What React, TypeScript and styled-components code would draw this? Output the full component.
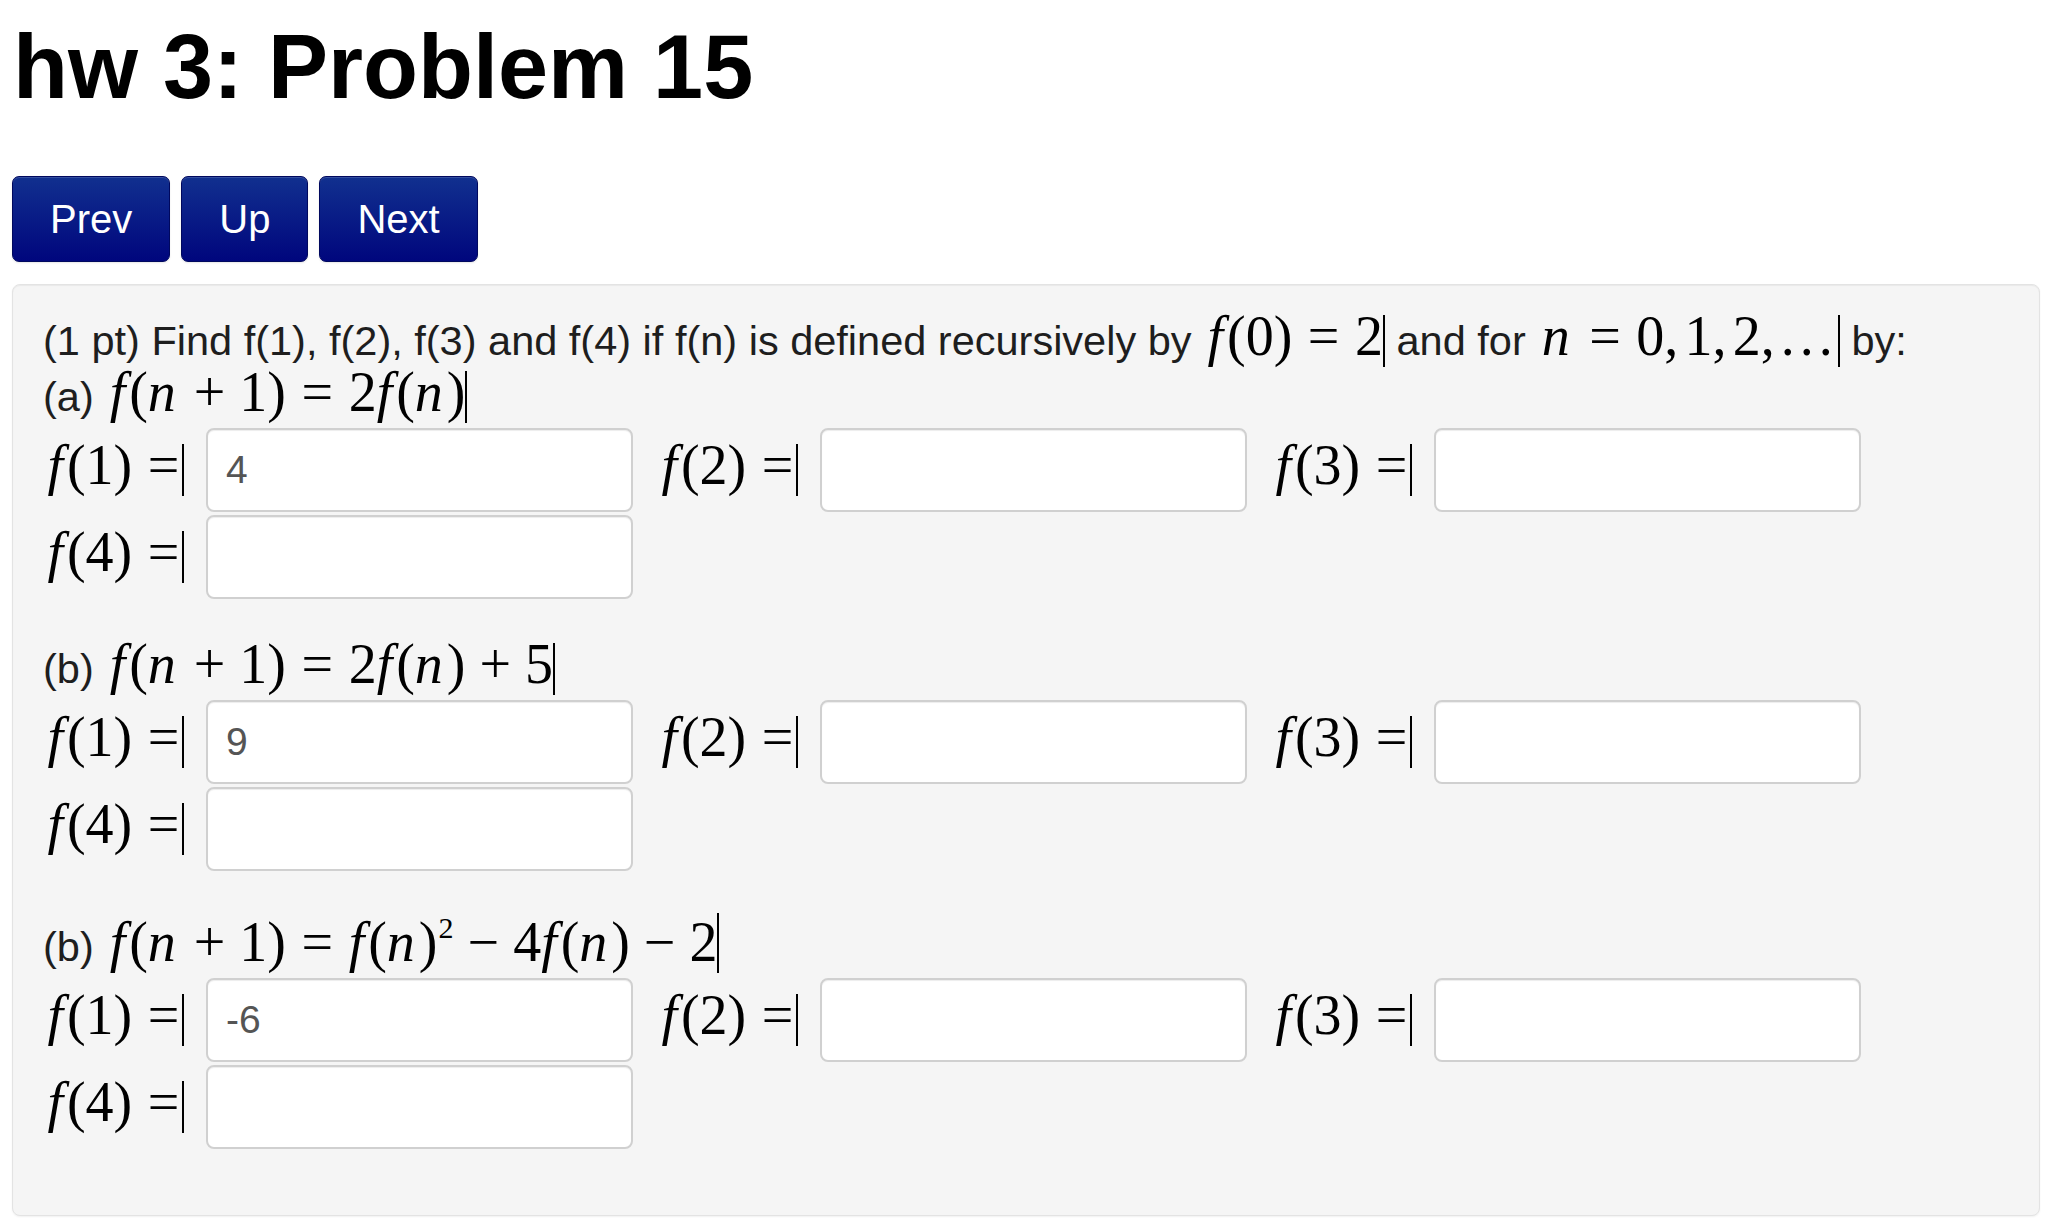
import React from 'react'
import styled, { createGlobalStyle } from 'styled-components'

const GlobalStyle = createGlobalStyle`
  body {
    margin: 0;
    background: #fff;
  }
`

const Page = styled.div`
  padding: 17px 6px 12px 12px;
  font-family: 'Liberation Sans', Arial, sans-serif;
  color: #1e1e1e;
`

const Title = styled.h1`
  margin: 0 0 0 1px;
  font-size: 90px;
  line-height: 101px;
  font-weight: bold;
  color: #000;
`

const NavBar = styled.nav`
  display: flex;
  gap: 11px;
  margin-top: 58px;
`

const NavButton = styled.button`
  height: 86px;
  padding: 0 37px;
  font-family: 'Liberation Sans', Arial, sans-serif;
  font-size: 40px;
  color: #fff;
  border: 1px solid #00085e;
  border-radius: 7px;
  background: linear-gradient(#11308f, #00067d);
  box-shadow: inset 0 1px 0 rgba(255, 255, 255, 0.15), 0 1px 2px rgba(0, 0, 0, 0.1);
  cursor: pointer;
`

const Panel = styled.div`
  margin-top: 22px;
  padding: 28px 30px 66px;
  background: #f5f5f5;
  border: 1px solid #e3e3e3;
  border-radius: 8px;
  box-shadow: inset 0 1px 1px rgba(0, 0, 0, 0.05), 0 1px 2px rgba(0, 0, 0, 0.06);
  font-size: 41.5px;
  line-height: 56px;
`

const Line = styled.div`
  white-space: nowrap;
`

const Section = styled.section`
  & + & {
    margin-top: 42px;
  }
`

// MathJax-like inline formula, with the thin caret bar on its right edge
const Math = styled.span`
  display: inline-block;
  padding: 0 0 10px 0.08em;
  font-family: 'Liberation Serif', 'Times New Roman', serif;
  font-size: 56px;
  line-height: 42px;
  color: #000;
  border-right: 2px solid #000;
  white-space: nowrap;
`

const V = styled.span`
  font-style: italic;
  padding-right: 0.07em;
`

const Rel = styled.span<{ $end?: boolean }>`
  margin: 0 ${(p) => (p.$end ? '0.05em' : '0.2778em')} 0 0.2778em;
`

const Bin = styled.span`
  margin: 0 0.25em;
`

const Comma = styled.span`
  margin-right: 0.11em;
`

const Dots = styled.span`
  letter-spacing: 0.09em;
`

const Sup = styled.sup`
  margin-left: 0.04em;
  font-size: 30px;
  line-height: 30px;
  vertical-align: 23px;
`

const AnswerGrid = styled.div`
  display: grid;
  grid-template-columns: repeat(3, max-content);
  column-gap: 24px;
  row-gap: 3px;
  margin-top: 3px;
`

const AnswerCell = styled.div`
  display: flex;
  align-items: center;
`

const AnswerLabel = styled.span`
  flex: 0 0 163px;
`

const AnswerInput = styled.input`
  box-sizing: border-box;
  width: 427px;
  height: 84px;
  padding: 0 18px;
  font-family: 'Liberation Sans', Arial, sans-serif;
  font-size: 39px;
  color: #555;
  background: #fff;
  border: 2px solid #d0d0d0;
  border-radius: 8px;
  box-shadow: inset 0 1px 1px rgba(0, 0, 0, 0.075);
  outline: none;
`

const fn = (
  <>
    <V>f</V>(<V>n</V>)
  </>
)

const sections = [
  {
    tag: '(a)',
    eq: (
      <>
        <V>f</V>(<V>n</V>
        <Bin>+</Bin>1)<Rel>=</Rel>2{fn}
      </>
    ),
    first: '4',
  },
  {
    tag: '(b)',
    eq: (
      <>
        <V>f</V>(<V>n</V>
        <Bin>+</Bin>1)<Rel>=</Rel>2{fn}
        <Bin>+</Bin>5
      </>
    ),
    first: '9',
  },
  {
    tag: '(b)',
    eq: (
      <>
        <V>f</V>(<V>n</V>
        <Bin>+</Bin>1)<Rel>=</Rel>
        {fn}
        <Sup>2</Sup>
        <Bin>−</Bin>4{fn}
        <Bin>−</Bin>2
      </>
    ),
    first: '-6',
  },
]

function Answer({ k, value }: { k: number; value?: string }) {
  return (
    <AnswerCell>
      <AnswerLabel>
        <Math>
          <V>f</V>({k})<Rel $end>=</Rel>
        </Math>
      </AnswerLabel>
      <AnswerInput type="text" defaultValue={value ?? ''} />
    </AnswerCell>
  )
}

export default function App() {
  return (
    <Page>
      <GlobalStyle />
      <Title>hw 3: Problem 15</Title>
      <NavBar>
        <NavButton>Prev</NavButton>
        <NavButton>Up</NavButton>
        <NavButton>Next</NavButton>
      </NavBar>
      <Panel>
        <Line>
          (1 pt) Find f(1), f(2), f(3) and f(4) if f(n) is defined recursively by{' '}
          <Math>
            <V>f</V>(0)<Rel>=</Rel>2
          </Math>{' '}
          and for{' '}
          <Math>
            <V>n</V>
            <Rel>=</Rel>0<Comma>,</Comma>1<Comma>,</Comma>2<Comma>,</Comma>
            <Dots>...</Dots>
          </Math>{' '}
          by:
        </Line>
        {sections.map((s, i) => (
          <Section key={i}>
            <Line>
              {s.tag} <Math>{s.eq}</Math>
            </Line>
            <AnswerGrid>
              {[1, 2, 3, 4].map((k) => (
                <Answer key={k} k={k} value={k === 1 ? s.first : undefined} />
              ))}
            </AnswerGrid>
          </Section>
        ))}
      </Panel>
    </Page>
  )
}
